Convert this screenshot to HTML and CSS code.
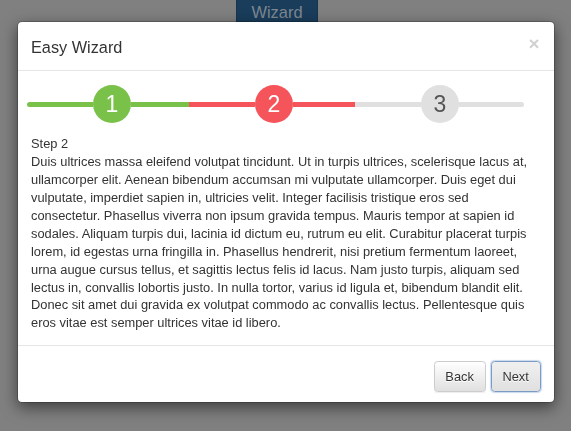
FILE: index.html
```html
<!DOCTYPE html>
<html lang="en">
<head>
<meta charset="utf-8">
<title>Easy Wizard</title>
<link rel="stylesheet" href="styles.css">
</head>
<body>
<div class="page">
  <button class="btn-launch" type="button">Wizard</button>
</div>
<div class="backdrop">
  <div class="modal">
    <div class="modal-header">
      <h4 class="modal-title">Easy Wizard</h4>
      <span class="close">&times;</span>
    </div>
    <div class="modal-body">
      <div class="steps">
        <div class="step step-done">
          <span class="line line-start"></span>
          <span class="dot">1</span>
          <span class="line"></span>
        </div>
        <div class="step step-active">
          <span class="line"></span>
          <span class="dot">2</span>
          <span class="line"></span>
        </div>
        <div class="step step-todo">
          <span class="line"></span>
          <span class="dot">3</span>
          <span class="line line-end"></span>
        </div>
      </div>
      <div class="step-content">
        <div>Step 2</div>
        <p class="text">
          <span>Duis ultrices massa eleifend volutpat tincidunt. Ut in turpis ultrices, scelerisque lacus at,</span>
          <span>ullamcorper elit. Aenean bibendum accumsan mi vulputate ullamcorper. Duis eget dui</span>
          <span>vulputate, imperdiet sapien in, ultricies velit. Integer facilisis tristique eros sed</span>
          <span>consectetur. Phasellus viverra non ipsum gravida tempus. Mauris tempor at sapien id</span>
          <span>sodales. Aliquam turpis dui, lacinia id dictum eu, rutrum eu elit. Curabitur placerat turpis</span>
          <span>lorem, id egestas urna fringilla in. Phasellus hendrerit, nisi pretium fermentum laoreet,</span>
          <span>urna augue cursus tellus, et sagittis lectus felis id lacus. Nam justo turpis, aliquam sed</span>
          <span>lectus in, convallis lobortis justo. In nulla tortor, varius id ligula et, bibendum blandit elit.</span>
          <span>Donec sit amet dui gravida ex volutpat commodo ac convallis lectus. Pellentesque quis</span>
          <span>eros vitae est semper ultrices vitae id libero.</span>
        </p>
      </div>
    </div>
    <div class="modal-footer">
      <button class="btn" type="button">Back</button>
      <button class="btn btn-focus" type="button">Next</button>
    </div>
  </div>
</div>
</body>
</html>
```

FILE: styles.css
```css
html, body {
  margin: 0;
  padding: 0;
}
body {
  background: #808080;
  font-family: "Liberation Sans", Arial, sans-serif;
  color: #333;
  width: 571px;
  height: 431px;
  overflow: hidden;
}
.page {
  width: 554px;
  text-align: center;
  margin-top: -8px;
}
.btn-launch {
  font-family: "Liberation Sans", Arial, sans-serif;
  font-size: 16.4px;
  line-height: 21.6px;
  padding: 9px 14.4px;
  background: #1a3d5c;
  border: 1px solid #17364f;
  border-radius: 5px;
  color: #7f8891;
}
.backdrop {
  position: fixed;
  inset: 0;
  padding-top: 21px;
}
.modal {
  width: 536px;
  margin: 0 auto;
  background: #fff;
  border: 1px solid rgba(0, 0, 0, 0.2);
  border-radius: 5px;
  box-shadow: 0 5px 15px rgba(0, 0, 0, 0.5);
  background-clip: padding-box;
}
.modal-header {
  display: flex;
  justify-content: space-between;
  align-items: flex-start;
  padding: 14px 14px 12px 13.5px;
  border-bottom: 1px solid #e5e5e5;
}
.modal-title {
  margin: 0;
  font-size: 16.3px;
  font-weight: normal;
  line-height: 22px;
  color: #333;
}
.close {
  font-size: 19px;
  font-weight: bold;
  line-height: 1;
  color: #000;
  opacity: 0.18;
  margin-top: -2px;
}
.modal-body {
  padding: 14px 13.5px 13px;
}
.steps {
  display: grid;
  grid-template-columns: 162px 166px 169px;
  margin-left: -4px;
}
.step {
  display: flex;
  align-items: center;
}
.line {
  height: 5px;
  flex: 1;
}
.step .line:first-child {
  flex: 0 0 66px;
}
.line-start {
  border-radius: 3px 0 0 3px;
}
.line-end {
  border-radius: 0 3px 3px 0;
}
.dot {
  width: 38px;
  height: 38px;
  border-radius: 50%;
  display: flex;
  align-items: center;
  justify-content: center;
  font-size: 23px;
  color: #fff;
}
.step-done .line, .step-done .dot { background: #7ac14a; }
.step-active .line, .step-active .dot { background: #f4545a; }
.step-todo .line, .step-todo .dot { background: #e0e0e0; }
.step-todo .dot { color: #555; }
.step-content {
  margin-top: 12px;
  font-size: 12.85px;
  line-height: 17.93px;
  color: #333;
}
.text {
  margin: 0;
}
.text span {
  display: block;
  white-space: nowrap;
}
.modal-footer {
  display: flex;
  justify-content: flex-end;
  gap: 5px;
  padding: 15px 13px 10px;
  border-top: 1px solid #e5e5e5;
}
.btn {
  font-family: "Liberation Sans", Arial, sans-serif;
  font-size: 12.8px;
  line-height: 18px;
  padding: 5.4px 10.8px;
  color: #333;
  border: 1px solid #ccc;
  border-radius: 3.6px;
  background: linear-gradient(to bottom, #fff 0, #e0e0e0 100%);
  text-shadow: 0 1px 0 #fff;
  box-shadow: inset 0 1px 0 rgba(255, 255, 255, 0.15), 0 1px 1px rgba(0, 0, 0, 0.075);
}
.btn-focus {
  background: linear-gradient(to bottom, #f0f0f0 0, #e0e0e0 100%);
  border-color: #7d9cc4;
  box-shadow: 0 0 1px 1px rgba(102, 150, 210, 0.35);
}
```
